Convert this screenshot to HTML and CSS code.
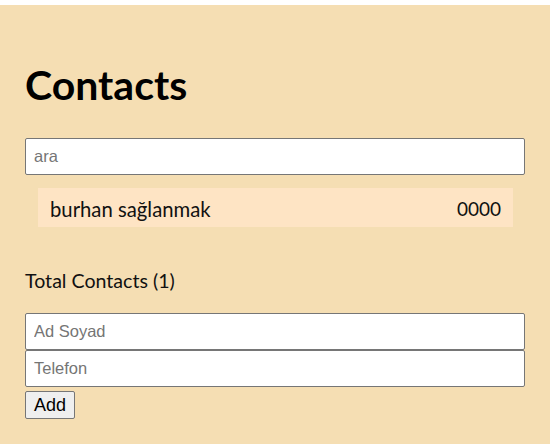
FILE: index.html
```html
<!DOCTYPE html>
<html>
<head>
<meta charset="utf-8">
<link rel="stylesheet" href="styles.css">
</head>
<body>
<div class="app">
  <h1 class="title">Contacts</h1>
  <input class="field search" type="text" placeholder="ara">
  <ul class="list">
    <li class="item"><span class="name">burhan sağlanmak</span><span class="phone">0000</span></li>
  </ul>
  <p class="total">Total Contacts (1)</p>
  <form class="form">
    <input class="field" type="text" placeholder="Ad Soyad">
    <input class="field" type="text" placeholder="Telefon">
    <button class="btn" type="button">Add</button>
  </form>
</div>
</body>
</html>
```

FILE: styles.css
```css
html, body {
  margin: 0;
  padding: 0;
  background: #ffffff;
}
body {
  padding-top: 5px;
  font-family: Lato, "Noto Sans", sans-serif;
}
.app {
  background: #f5deb3;
  min-height: 439px;
  box-sizing: border-box;
  padding: 56px 25px 0 25px;
}
.title {
  margin: 0;
  font-size: 41px;
  line-height: 48px;
  font-weight: 700;
  color: #000;
}
.field {
  display: block;
  width: 100%;
  height: 37px;
  box-sizing: border-box;
  margin: 0;
  border: 1px solid #767676;
  border-radius: 2px;
  padding: 0 8px;
  font-family: "Liberation Sans", Arial, sans-serif;
  font-size: 16.5px;
  background: #fff;
}
.field::placeholder {
  color: #757575;
}
.search {
  margin-top: 29px;
}
.list {
  list-style: none;
  margin: 13px 12px 0 13px;
  padding: 0;
}
.item {
  display: flex;
  justify-content: space-between;
  align-items: center;
  height: 39px;
  box-sizing: border-box;
  padding: 2px 12px 0 12px;
  background: #fee4c4;
  font-size: 19px;
  color: #111;
}
.name {
  font-size: 20.3px;
}
.total {
  margin: 42px 0 0 0;
  font-size: 19.6px;
  line-height: 24px;
  color: #111;
}
.form {
  margin-top: 20px;
}
.btn {
  display: block;
  margin-top: 4px;
  height: 28px;
  width: 50px;
  padding: 0;
  font-family: "Liberation Sans", Arial, sans-serif;
  font-size: 18px;
  background: #efefef;
  border: 1px solid #767676;
  border-radius: 2px;
  color: #000;
}
```
